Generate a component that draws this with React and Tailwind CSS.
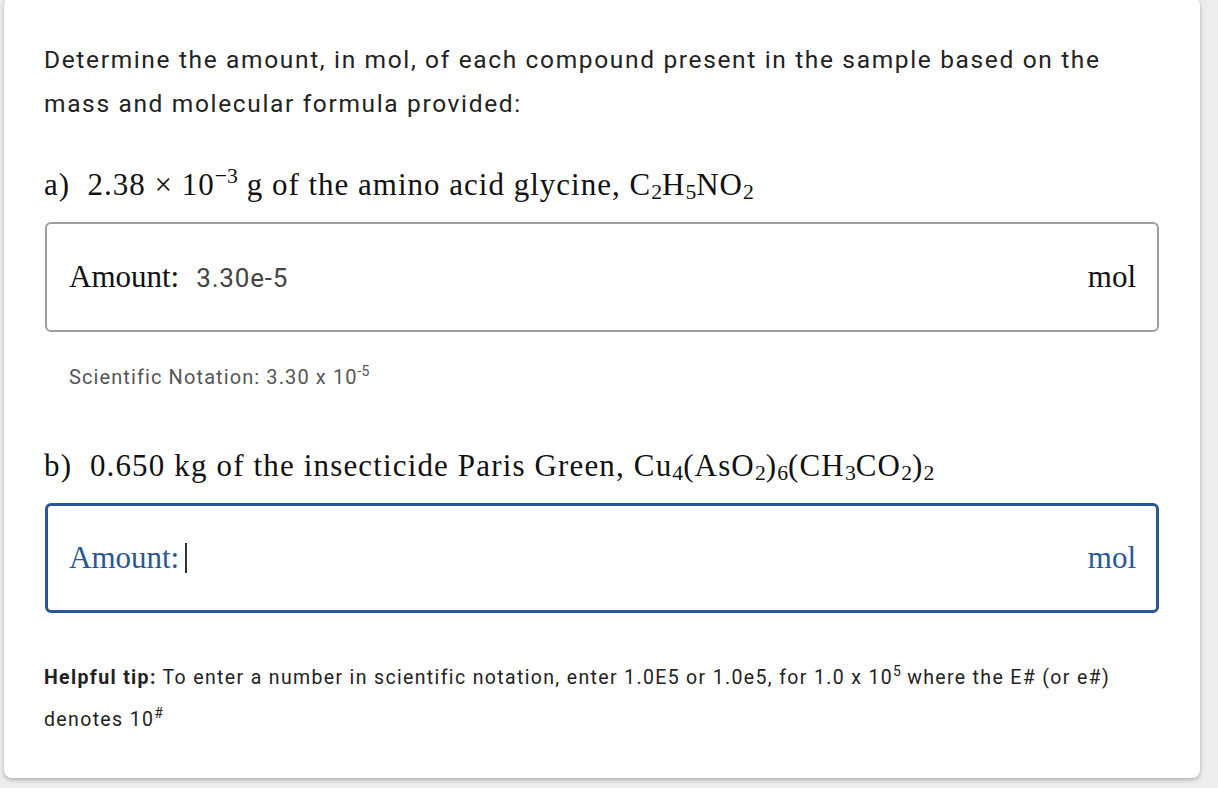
import React from "react";

const serif = { fontFamily: '"Liberation Serif", "DejaVu Serif", serif' };

function Sub({ children }) {
  return <sub className="text-[0.7em] relative top-[0.18em] align-baseline leading-none tracking-normal">{children}</sub>;
}
function Sup({ children }) {
  return <sup className="text-[0.7em] relative -top-[0.55em] align-baseline leading-none tracking-normal">{children}</sup>;
}
function SSup({ children }) {
  return <sup className="text-[14px] relative -top-[0.55em] align-baseline leading-none tracking-normal">{children}</sup>;
}

export default function App() {
  return (
    <div className="min-h-[788px] w-full bg-[#ededed] overflow-hidden" style={{ fontFamily: 'Roboto, "Liberation Sans", sans-serif' }}>
      <div className="ml-[4px] mt-[-3px] w-[1196px] bg-white rounded-[8px] shadow-[0_2px_4px_rgba(0,0,0,0.25)] pl-[40px] pr-[40px] pt-[41px] pb-[37px]">
        <p className="text-[24.5px] tracking-[1.65px] leading-[44px] text-[#222]">
          Determine the amount, in mol, of each compound present in the sample based on the mass and molecular formula provided:
        </p>

        <div className="mt-[39px] text-[31px] tracking-[1px] leading-[40px] text-[#111]" style={serif}>
          a)&nbsp; 2.38 × 10<Sup>−3</Sup> g of the amino acid glycine, C<Sub>2</Sub>H<Sub>5</Sub>NO<Sub>2</Sub>
        </div>

        <div className="mt-[17px] ml-[1px] w-[1114px] h-[110px] border-2 border-[#9e9e9e] rounded-[6px] flex items-center justify-between pl-[22px] pr-[21px]">
          <div className="flex items-baseline">
            <span className="text-[31px] text-[#111]" style={serif}>Amount:</span>
            <span className="ml-[17px] text-[26px] tracking-[0.8px] text-[#444]">3.30e-5</span>
          </div>
          <span className="text-[31px] text-[#111]" style={serif}>mol</span>
        </div>

        <div className="mt-[30px] pl-[25px] text-[20px] tracking-[1.1px] leading-[30px] text-[#555]">
          Scientific Notation: 3.30 x 10<SSup>-5</SSup>
        </div>

        <div className="mt-[54px] text-[31px] tracking-[1.15px] leading-[40px] text-[#111]" style={serif}>
          b)&nbsp; 0.650 kg of the insecticide Paris Green, Cu<Sub>4</Sub>(AsO<Sub>2</Sub>)<Sub>6</Sub>(CH<Sub>3</Sub>CO<Sub>2</Sub>)<Sub>2</Sub>
        </div>

        <div className="mt-[17px] ml-[1px] w-[1114px] h-[110px] border-[3px] border-[#2a5797] rounded-[6px] flex items-center justify-between pl-[21px] pr-[20px]">
          <div className="flex items-center">
            <span className="text-[31px] text-[#2a5797]" style={serif}>Amount:</span>
            <span className="ml-[6px] w-[1.5px] h-[30px] bg-[#333]"></span>
          </div>
          <span className="text-[31px] text-[#2a5797]" style={serif}>mol</span>
        </div>

        <p className="mt-[44px] text-[19.5px] tracking-[1.35px] leading-[42px] text-[#222]">
          <b className="font-bold">Helpful tip:</b> To enter a number in scientific notation, enter 1.0E5 or 1.0e5, for 1.0 x 10<SSup>5</SSup> where the E# (or e#) denotes 10<SSup>#</SSup>
        </p>
      </div>
    </div>
  );
}
